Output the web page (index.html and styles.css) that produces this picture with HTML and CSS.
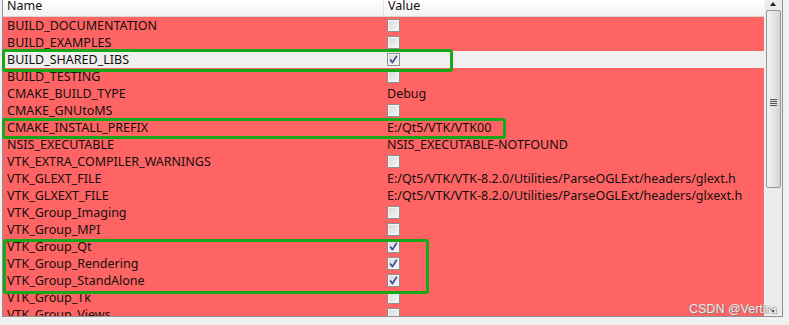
FILE: index.html
```html
<!DOCTYPE html>
<html>
<head>
<meta charset="utf-8">
<link rel="stylesheet" href="styles.css">
</head>
<body>
<div class="frame">
  <div class="table">
    <div class="header">
      <div class="hname">Name</div>
      <div class="hvalue">Value</div>
    </div>
    <div class="rows">
      <div class="row"><div class="name">BUILD_DOCUMENTATION</div><div class="value"><span class="cb"></span></div></div>
      <div class="row"><div class="name">BUILD_EXAMPLES</div><div class="value"><span class="cb"></span></div></div>
      <div class="row sel"><div class="name">BUILD_SHARED_LIBS</div><div class="value"><span class="cb on"><svg viewBox="0 0 11 11" width="11" height="11"><path d="M2.2 5.6 L4.4 8.6 L8.8 1.8" fill="none" stroke="#3a4a95" stroke-width="1.7" stroke-linejoin="round"/></svg></span></div></div>
      <div class="row"><div class="name">BUILD_TESTING</div><div class="value"><span class="cb"></span></div></div>
      <div class="row"><div class="name">CMAKE_BUILD_TYPE</div><div class="value">Debug</div></div>
      <div class="row"><div class="name">CMAKE_GNUtoMS</div><div class="value"><span class="cb"></span></div></div>
      <div class="row"><div class="name">CMAKE_INSTALL_PREFIX</div><div class="value">E:/Qt5/VTK/VTK00</div></div>
      <div class="row"><div class="name">NSIS_EXECUTABLE</div><div class="value">NSIS_EXECUTABLE-NOTFOUND</div></div>
      <div class="row"><div class="name">VTK_EXTRA_COMPILER_WARNINGS</div><div class="value"><span class="cb"></span></div></div>
      <div class="row"><div class="name">VTK_GLEXT_FILE</div><div class="value">E:/Qt5/VTK/VTK-8.2.0/Utilities/ParseOGLExt/headers/glext.h</div></div>
      <div class="row"><div class="name">VTK_GLXEXT_FILE</div><div class="value">E:/Qt5/VTK/VTK-8.2.0/Utilities/ParseOGLExt/headers/glxext.h</div></div>
      <div class="row"><div class="name">VTK_Group_Imaging</div><div class="value"><span class="cb"></span></div></div>
      <div class="row"><div class="name">VTK_Group_MPI</div><div class="value"><span class="cb"></span></div></div>
      <div class="row"><div class="name">VTK_Group_Qt</div><div class="value"><span class="cb on"><svg viewBox="0 0 11 11" width="11" height="11"><path d="M2.2 5.6 L4.4 8.6 L8.8 1.8" fill="none" stroke="#3a4a95" stroke-width="1.7" stroke-linejoin="round"/></svg></span></div></div>
      <div class="row"><div class="name">VTK_Group_Rendering</div><div class="value"><span class="cb on"><svg viewBox="0 0 11 11" width="11" height="11"><path d="M2.2 5.6 L4.4 8.6 L8.8 1.8" fill="none" stroke="#3a4a95" stroke-width="1.7" stroke-linejoin="round"/></svg></span></div></div>
      <div class="row"><div class="name">VTK_Group_StandAlone</div><div class="value"><span class="cb on"><svg viewBox="0 0 11 11" width="11" height="11"><path d="M2.2 5.6 L4.4 8.6 L8.8 1.8" fill="none" stroke="#3a4a95" stroke-width="1.7" stroke-linejoin="round"/></svg></span></div></div>
      <div class="row"><div class="name">VTK_Group_Tk</div><div class="value"><span class="cb"></span></div></div>
      <div class="row"><div class="name">VTK_Group_Views</div><div class="value"><span class="cb"></span></div></div>
    </div>
  </div>
  <div class="scroll">
    <div class="arrow up"></div>
    <div class="thumb"><div class="grip"><i></i><i></i><i></i><i></i></div></div>
    <div class="track"></div>
    <div class="arrow down"></div>
  </div>
</div>
<div class="mark box1"></div>
<div class="mark box2"></div>
<div class="mark box3"></div>
<div class="watermark">CSDN @Vertira</div>
</body>
</html>
```
FILE: styles.css
```css
html, body {
  margin: 0;
  padding: 0;
}
body {
  width: 789px;
  height: 325px;
  overflow: hidden;
  background: #f0f0f0;
  font-family: "Noto Sans", "Open Sans", sans-serif;
  font-size: 12.5px;
  color: #140e0e;
  position: relative;
}
.frame {
  display: flex;
  margin-left: 2px;
  width: 779px;
  height: 316px;
  border-left: 1px solid #8d9099;
  border-right: 1px solid #8d9099;
  border-bottom: 1px solid #8d9099;
  background: #fff;
}
.table {
  width: 762px;
  display: flex;
  flex-direction: column;
  overflow: hidden;
}
.header {
  display: flex;
  height: 16px;
  flex: none;
  background: linear-gradient(#ffffff, #f1f2f4);
  border-bottom: 1px solid #d5d5d5;
  border-right: 1px solid #d5d5d5;
  box-sizing: content-box;
  width: 761px;
  line-height: 11px;
  overflow: hidden;
}
.hname {
  width: 376px;
  padding-left: 4px;
  border-right: 1px solid #e3e4e6;
}
.hvalue {
  padding-left: 4px;
}
.rows {
  flex: 1;
  overflow: hidden;
  background: #ff6464;
}
.row {
  display: flex;
  height: 17px;
  line-height: 17px;
  background: #ff6464;
  white-space: nowrap;
}
.row.sel {
  background: #f0f0f0;
}
.name {
  width: 376px;
  padding-left: 4px;
  flex: none;
}
.value {
  padding-left: 4px;
  display: flex;
  align-items: center;
}
.cb {
  width: 11px;
  height: 11px;
  border: 1px solid #8f8f8f;
  background: linear-gradient(135deg, #d8d8d8, #f6f6f6);
  box-shadow: inset 0 0 0 1px #f4f4f4;
  display: flex;
  align-items: center;
  justify-content: center;
}
.cb svg {
  display: block;
}
.scroll {
  width: 17px;
  display: flex;
  flex-direction: column;
  background: #ececec;
  border-left: 1px solid #f4f4f4;
}
.arrow {
  height: 10px;
  flex: none;
  display: flex;
  justify-content: center;
  position: relative;
}
.arrow.up::after {
  content: "";
  position: absolute;
  top: 2px;
  left: 5px;
  border-left: 3px solid transparent;
  border-right: 3px solid transparent;
  border-bottom: 4px solid #222;
}
.arrow.down::after {
  content: "";
  position: absolute;
  top: 3px;
  left: 5px;
  border-left: 3px solid transparent;
  border-right: 3px solid transparent;
  border-top: 4px solid #222;
}
.thumb {
  height: 176px;
  flex: none;
  margin: 0 1px;
  border: 1px solid #979797;
  border-radius: 2px;
  background: linear-gradient(90deg, #f3f3f3, #e6e6e6 50%, #d2d2d2);
  display: flex;
  align-items: center;
  justify-content: center;
}
.grip {
  display: flex;
  flex-direction: column;
  gap: 1px;
  margin-top: 6px;
}
.grip i {
  display: block;
  width: 7px;
  height: 1px;
  background: #555;
}
.track {
  flex: 1;
}
.mark {
  position: absolute;
  border: 3px solid #17a81a;
  border-radius: 3px;
  box-sizing: border-box;
}
.box1 {
  left: 2px;
  top: 49px;
  width: 451px;
  height: 23px;
}
.box2 {
  left: 2px;
  top: 118px;
  width: 504px;
  height: 21px;
}
.box3 {
  left: 3px;
  top: 239px;
  width: 426px;
  height: 55px;
}
.watermark {
  position: absolute;
  left: 689px;
  top: 302px;
  font-family: "Liberation Sans", Arial, sans-serif;
  font-size: 12.5px;
  color: rgba(255, 255, 255, 0.85);
  text-shadow: 0 0 1px #888, 1px 1px 0 rgba(120, 120, 120, 0.6);
  white-space: nowrap;
}
```
